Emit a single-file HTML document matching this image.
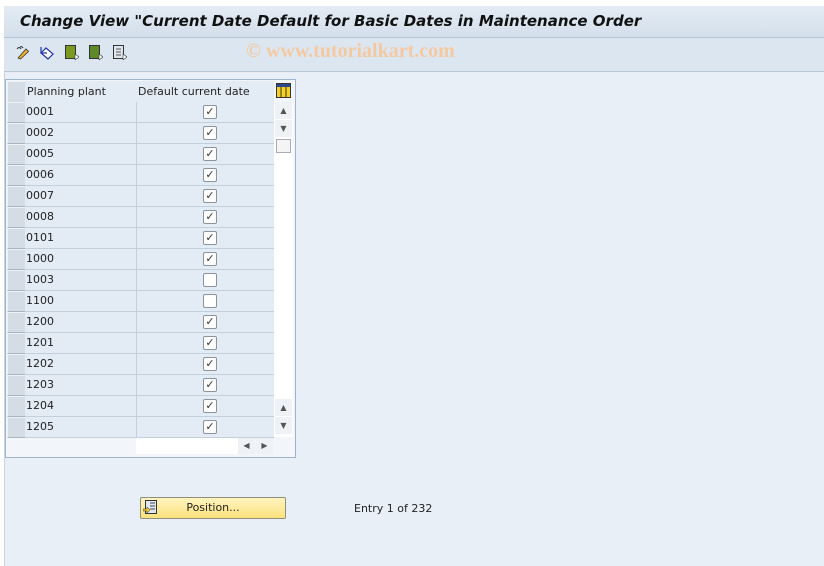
<!DOCTYPE html>
<html><head><style>
body{margin:0;width:824px;height:566px;background:#fff;font-family:"DejaVu Sans",sans-serif;font-size:11px;position:relative;overflow:hidden}
.frame{position:absolute;left:4px;top:6px;width:820px;height:560px;background:#e8eff7;border-left:1px solid #c9d4df}
.title{position:absolute;left:4px;top:6px;width:820px;height:31px;background:linear-gradient(#e4ecf5,#d3dfeb);border-bottom:1px solid #b8c7d6}
.title span{position:absolute;left:16px;top:6px;font:italic bold 15px "DejaVu Sans",sans-serif;color:#111}
.tb{position:absolute;left:4px;top:38px;width:820px;height:33px;background:#dce6f0;border-bottom:1px solid #b8c7d6}
.wm{position:absolute;left:246px;top:40px;font:bold 20px "Liberation Serif",serif;color:#f4c9a0}
.ic{position:absolute;top:45px;width:14px;height:15px}
.tbl{position:absolute;left:5px;top:79px;width:289px;height:377px;border:1px solid #9db4cc;background:#f2f6fa}
.sel{position:absolute;left:1px;width:17px;height:19px;background:#d4dde6;border:1px solid #eef2f6;border-right-color:#a8b5c2;border-bottom-color:#a8b5c2}
.c1{position:absolute;left:19px;width:110px;height:20px;background:#e3ecf5;line-height:20px;padding-left:1px;color:#222}
.c2{position:absolute;left:130px;width:137px;height:20px;background:#e3ecf5}
.cb{position:absolute;left:66px;top:3px;width:12px;height:12px;border:1px solid #8a949e;background:#fff;border-radius:2px;font-size:11px;line-height:12px;text-align:center;color:#333;font-weight:bold}
.hd{position:absolute;top:1px;height:21px;background:#e3ecf5;line-height:21px;color:#222;border-bottom:1px solid #c3d0dc}
.vs{position:absolute;left:268px;top:22px;width:19px;height:335px;background:#fff}
.sb{position:absolute;width:17px;height:17px;background:#eef2f6;color:#555;font-size:8px;text-align:center;line-height:17px}
.btn{position:absolute;left:140px;top:497px;width:144px;height:20px;border:1px solid #8f8f7c;border-radius:2px;background:linear-gradient(#fff4c0,#fbe27d);text-align:center;line-height:20px;color:#222}
</style></head><body>
<div class="frame"></div>
<div class="title"><span>Change View "Current Date Default for Basic Dates in Maintenance Order</span></div>
<div class="tb"></div>
<div class="wm">© www.tutorialkart.com</div>
<svg class="ic" style="left:16px" viewBox="0 0 14 15"><path d="M2 13 L10 4 L12.5 6.5 L4.5 14Z" fill="#f0b030" stroke="#333" stroke-width=".8"/><path d="M1 4 q2-3 4 0 M4 2 q2 -1 3 1" stroke="#333" fill="none"/></svg>
<svg class="ic" style="left:40px" viewBox="0 0 14 15"><path d="M1 8 L6 3 L13 9 L8 14Z" fill="#fff" stroke="#2233aa" stroke-width="1.2"/><path d="M1 2 v6 h6" stroke="#2233aa" stroke-width="1.2" fill="none"/></svg>
<svg class="ic" style="left:65px" viewBox="0 0 14 15"><rect x="0.5" y="0.5" width="10" height="13" fill="#7a9a20" stroke="#333"/><path d="M10 9 l4 3 -4 3z" fill="#fff" stroke="#333" stroke-width=".6"/></svg>
<svg class="ic" style="left:89px" viewBox="0 0 14 15"><rect x="0.5" y="0.5" width="10" height="13" fill="#5f8a2a" stroke="#333"/><path d="M10 9 l4 3 -4 3z" fill="#fff" stroke="#333" stroke-width=".6"/></svg>
<svg class="ic" style="left:113px" viewBox="0 0 14 15"><rect x="0.5" y="0.5" width="10" height="13" fill="#dfe6ee" stroke="#333"/><path d="M3 4h5M3 7h5M3 10h5" stroke="#555"/><path d="M10 9 l4 3 -4 3z" fill="#fff" stroke="#333" stroke-width=".6"/></svg>

<div class="tbl">
<div class="sel" style="top:1px;height:20px"></div>
<div class="hd" style="left:19px;width:110px;padding-left:2px;border-right:1px solid #c3d0dc">Planning plant</div>
<div class="hd" style="left:131px;width:136px;padding-left:1px">Default current date</div>
<svg style="position:absolute;left:270px;top:3px" width="15" height="15"><rect x="0.5" y="0.5" width="14" height="14" fill="#f5d020" stroke="#333"/><rect x="1" y="1" width="13" height="3" fill="#2a4a90"/><path d="M5 4v10M10 4v10" stroke="#333"/></svg>
<div class="vs"></div>
<div class="sb" style="left:269px;top:22px">▲</div>
<div class="sb" style="left:269px;top:40px">▼</div>
<div class="sb" style="left:270px;top:59px;width:13px;height:12px;border:1px solid #aab;background:#f4f4f4"></div>
<div class="sb" style="left:269px;top:319px">▲</div>
<div class="sb" style="left:269px;top:337px">▼</div>
<div style="position:absolute;left:130px;top:357px;width:102px;height:17px;background:#fff"></div>
<div class="sb" style="left:232px;top:357px">◀</div>
<div class="sb" style="left:250px;top:357px">▶</div>
<div id="rows"></div>
</div>
<div class="btn"><svg style="position:absolute;left:2px;top:2px" width="15" height="15"><rect x="2.5" y="0.5" width="11" height="13" fill="#e0e6ee" stroke="#333"/><path d="M7 3h5M7 6h5M7 9h5" stroke="#445"/><path d="M0 9h4v-2l3 3-3 3v-2H0z" fill="#f5d020" stroke="#333" stroke-width=".5"/></svg>Position...</div>
<div style="position:absolute;left:354px;top:502px;color:#222">Entry 1 of 232</div>
<script>
var d=[["0001",1],["0002",1],["0005",1],["0006",1],["0007",1],["0008",1],["0101",1],["1000",1],["1003",0],["1100",0],["1200",1],["1201",1],["1202",1],["1203",1],["1204",1],["1205",1]];
var h="";d.forEach(function(r,i){var t=22+i*21;h+='<div class="sel" style="top:'+t+'px"></div><div class="c1" style="top:'+t+'px;border-bottom:1px solid #c3d0dc">'+r[0]+'</div><div class="c2" style="top:'+t+'px;border-left:1px solid #c3d0dc;border-bottom:1px solid #c3d0dc"><div class="cb">'+(r[1]?'✓':'')+'</div></div>';});
document.getElementById("rows").innerHTML=h;
</script>
</body></html>
